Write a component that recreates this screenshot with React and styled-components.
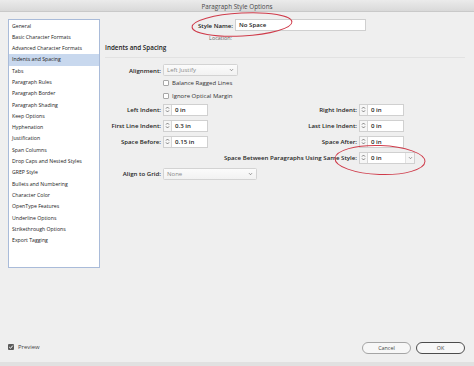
import React from 'react'
import styled, { createGlobalStyle } from 'styled-components'

const SECTIONS = [
   'General',
   'Basic Character Formats',
   'Advanced Character Formats',
   'Indents and Spacing',
   'Tabs',
   'Paragraph Rules',
   'Paragraph Border',
   'Paragraph Shading',
   'Keep Options',
   'Hyphenation',
   'Justification',
   'Span Columns',
   'Drop Caps and Nested Styles',
   'GREP Style',
   'Bullets and Numbering',
   'Character Color',
   'OpenType Features',
   'Underline Options',
   'Strikethrough Options',
   'Export Tagging',
]

const SpinArrows = () => (
   <svg width="5" height="9" viewBox="0 0 5 9">
      <path d="M1 3.6 L2.5 2 L4 3.6 M1 5.4 L2.5 7 L4 5.4" fill="none" stroke="#666" strokeWidth="0.8" />
   </svg>
)

const Chevron = () => (
   <svg width="5" height="4" viewBox="0 0 5 4">
      <path d="M1 1.2 L2.5 2.7 L4 1.2" fill="none" stroke="#777" strokeWidth="0.8" />
   </svg>
)

const Spinner = ({ value, withMenu }) => (
   <SpinBox $wide={withMenu}>
      <SpinButton>
         <SpinArrows />
      </SpinButton>
      <SpinValue>{value}</SpinValue>
      {withMenu && (
         <MenuButton>
            <Chevron />
         </MenuButton>
      )}
   </SpinBox>
)

const Select = ({ value, width }) => (
   <SelectBox $width={width}>
      <span>{value}</span>
      <Chevron />
   </SelectBox>
)

const Check = ({ label }) => (
   <CheckLabel>
      <CheckBox />
      {label}
   </CheckLabel>
)

const App = () => {
   return (
      <Window>
         <GlobalStyle />
         <TitleBar>Paragraph Style Options</TitleBar>
         <Content>
            <Sidebar>
               {SECTIONS.map((s) => (
                  <SideItem key={s} $active={s === 'Indents and Spacing'}>
                     {s}
                  </SideItem>
               ))}
            </Sidebar>
            <Main>
               <NameRow>
                  <NameLabel>Style Name:</NameLabel>
                  <NameInput>No Space</NameInput>
               </NameRow>
               <LocationRow>
                  <NameLabel $muted>Location:</NameLabel>
               </LocationRow>
               <Heading>Indents and Spacing</Heading>
               <Separator />
               <FieldRow>
                  <Label>Alignment:</Label>
                  <Wide>
                     <Select value="Left Justify" width={75} />
                  </Wide>
               </FieldRow>
               <CheckRow>
                  <Wide>
                     <Check label="Balance Ragged Lines" />
                  </Wide>
               </CheckRow>
               <CheckRow>
                  <Wide>
                     <Check label="Ignore Optical Margin" />
                  </Wide>
               </CheckRow>
               <FieldRow $top={1.5}>
                  <Label>Left Indent:</Label>
                  <Spinner value="0 in" />
                  <Label>Right Indent:</Label>
                  <Spinner value="0 in" />
               </FieldRow>
               <FieldRow $top={4}>
                  <Label>First Line Indent:</Label>
                  <Spinner value="0.3 in" />
                  <Label>Last Line Indent:</Label>
                  <Spinner value="0 in" />
               </FieldRow>
               <FieldRow $top={4}>
                  <Label>Space Before:</Label>
                  <Spinner value="0.15 in" />
                  <Label>Space After:</Label>
                  <Spinner value="0 in" />
               </FieldRow>
               <FieldRow $top={4}>
                  <Blank />
                  <Blank />
                  <Label>Space Between Paragraphs Using Same Style:</Label>
                  <Spinner value="0 in" withMenu />
               </FieldRow>
               <FieldRow $top={4}>
                  <Label>Align to Grid:</Label>
                  <Wide>
                     <Select value="None" width={94} />
                  </Wide>
               </FieldRow>
            </Main>
         </Content>
         <Footer>
            <PreviewLabel>
               <CheckedBox>
                  <svg width="6" height="6" viewBox="0 0 6 6">
                     <path d="M1.2 3 L2.5 4.3 L4.8 1.6" fill="none" stroke="#fff" strokeWidth="1" />
                  </svg>
               </CheckedBox>
               Preview
            </PreviewLabel>
            <Buttons>
               <Button>Cancel</Button>
               <Button $primary>OK</Button>
            </Buttons>
         </Footer>
         <BottomEdge />
         <Marks width="474" height="366" viewBox="0 0 474 366">
            <ellipse cx="242" cy="24.5" rx="50" ry="11.5" transform="rotate(-3 242 24.5)" />
            <ellipse cx="380" cy="160" rx="45" ry="14.5" transform="rotate(2 380 160)" />
         </Marks>
      </Window>
   )
}

const GlobalStyle = createGlobalStyle`
   html, body {
      margin: 0;
      padding: 0;
      background: #efefef;
   }
   body {
      font-family: "Open Sans", "Liberation Sans", sans-serif;
      color: #222;
   }
`
const Window = styled.div`
   position: relative;
   width: 474px;
   height: 366px;
   display: flex;
   flex-direction: column;
   background: #efefef;
   overflow: hidden;
`
const TitleBar = styled.div`
   height: 12px;
   flex: none;
   display: flex;
   align-items: center;
   justify-content: center;
   background: linear-gradient(#ebebeb, #d9d9d9);
   border-bottom: 1px solid #c9c9c9;
   box-sizing: border-box;
   font-size: 6.3px;
   color: #4a4a4a;
   padding-top: 1px;
`
const Content = styled.div`
   height: 324px;
   flex: none;
   display: flex;
   gap: 5px;
   padding: 7px 8px 0 8px;
   box-sizing: border-box;
`
const Sidebar = styled.ul`
   list-style: none;
   margin: 0;
   padding: 0.5px 0 0;
   width: 92px;
   height: 249px;
   box-sizing: border-box;
   background: #ffffff;
   border: 1px solid #a9bbd9;
   flex: none;
`
const SideItem = styled.li`
   height: 11.3px;
   line-height: 11.3px;
   padding-left: 3px;
   font-size: 5.2px;
   font-weight: 500;
   color: #222;
   white-space: nowrap;
   background: ${(p) => (p.$active ? '#c8d8ee' : 'transparent')};
`
const Main = styled.div`
   flex: 1;
   display: flex;
   flex-direction: column;
   padding-right: 1px;
`
const NameRow = styled.div`
   display: flex;
   align-items: center;
   gap: 2px;
   height: 12px;
`
const NameLabel = styled.div`
   width: 128px;
   text-align: right;
   font-size: 6.1px;
   font-weight: 600;
   color: ${(p) => (p.$muted ? '#666' : '#222')};
`
const NameInput = styled.div`
   width: 131px;
   height: 12px;
   box-sizing: border-box;
   background: #fff;
   border: 1px solid #cfcfcf;
   padding-left: 3px;
   font-size: 6.1px;
   font-weight: 600;
   line-height: 10px;
`
const LocationRow = styled.div`
   display: flex;
   margin-top: 3px;
   height: 8px;
   align-items: center;
   & > div {
      width: 127px;
      font-size: 5.4px;
      font-weight: 500;
   }
`
const Heading = styled.div`
   margin-top: 2px;
   height: 8px;
   line-height: 8px;
   font-size: 6.3px;
   font-weight: 600;
   color: #222;
`
const Separator = styled.div`
   margin-top: 5px;
   height: 1px;
   background: #e2e2e2;
`
const FieldRow = styled.div`
   display: grid;
   grid-template-columns: 56px 45px 147px auto;
   column-gap: 2px;
   align-items: center;
   height: 12px;
   margin-top: ${(p) => (p.$top != null ? p.$top : 6)}px;
`
const CheckRow = styled(FieldRow)`
   height: 13px;
   margin-top: 0;
`
const Label = styled.div`
   text-align: right;
   white-space: nowrap;
   font-size: 6.1px;
   font-weight: 600;
   color: #1e1e1e;
`
const Blank = styled.div``
const Wide = styled.div`
   grid-column: 2 / span 3;
   justify-self: start;
`
const SpinBox = styled.div`
   width: ${(p) => (p.$wide ? 56 : 45)}px;
   height: 12px;
   box-sizing: border-box;
   display: flex;
   align-items: center;
   background: #fff;
   border: 1px solid #d0d0d0;
`
const SpinButton = styled.div`
   width: 7px;
   height: 100%;
   display: flex;
   align-items: center;
   justify-content: center;
   background: #f6f6f6;
   border-right: 1px solid #d6d6d6;
   flex: none;
`
const SpinValue = styled.div`
   flex: 1;
   padding-left: 3px;
   font-size: 6.1px;
   font-weight: 600;
   color: #222;
`
const MenuButton = styled.div`
   width: 8px;
   height: 100%;
   display: flex;
   align-items: center;
   justify-content: center;
   border-left: 1px solid #e2e2e2;
   background: #f6f6f6;
`
const SelectBox = styled.div`
   width: ${(p) => p.$width}px;
   height: 12px;
   box-sizing: border-box;
   display: flex;
   align-items: center;
   justify-content: space-between;
   padding: 0 3px 0 3px;
   background: linear-gradient(#fbfbfb, #f2f2f2);
   border: 1px solid #d3d3d3;
   border-radius: 1.5px;
   font-size: 6px;
   font-weight: 500;
   color: #8a8a8a;
`
const CheckLabel = styled.label`
   display: flex;
   align-items: center;
   gap: 3px;
   font-size: 6px;
   font-weight: 500;
   color: #333;
`
const CheckBox = styled.span`
   width: 6px;
   height: 6px;
   box-sizing: border-box;
   background: #fff;
   border: 1px solid #a8a8a8;
   border-radius: 1px;
`
const Footer = styled.div`
   height: 24px;
   flex: none;
   display: flex;
   align-items: center;
   justify-content: space-between;
   padding: 0 9px 0 8px;
`
const PreviewLabel = styled.label`
   display: flex;
   align-items: center;
   gap: 4px;
   margin-top: -3px;
   font-size: 5.9px;
   font-weight: 500;
   color: #444;
`
const CheckedBox = styled.span`
   width: 6px;
   height: 6px;
   display: flex;
   align-items: center;
   justify-content: center;
   background: #5a5a5a;
   border-radius: 1px;
`
const Buttons = styled.div`
   display: flex;
   gap: 5px;
`
const Button = styled.button`
   width: 49px;
   height: 12px;
   padding: 0;
   box-sizing: border-box;
   border-radius: 6px;
   background: #f7f7f7;
   border: 1px solid ${(p) => (p.$primary ? '#4d4d4d' : '#a5a5a5')};
   font-family: "Open Sans", "Liberation Sans", sans-serif;
   font-size: 5.4px;
   color: #444;
`
const BottomEdge = styled.div`
   margin-top: 2px;
   flex: 1;
   background: #e1e1e1;
`
const Marks = styled.svg`
   position: absolute;
   left: 0;
   top: 0;
   pointer-events: none;
   ellipse {
      fill: none;
      stroke: #cf3b4a;
      stroke-width: 1;
   }
`

export default App
